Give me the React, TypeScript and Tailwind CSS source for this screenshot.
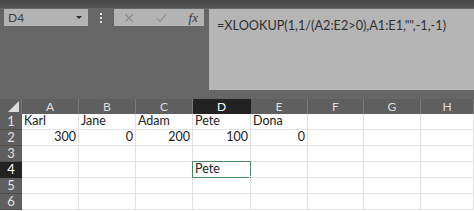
import React from 'react';

const COLS = ['A', 'B', 'C', 'D', 'E', 'F', 'G', 'H'];
const WIDTHS = ['w-[57px]', 'w-[57px]', 'w-[57px]', 'w-[58px]', 'w-[57px]', 'w-[56px]', 'w-[57px]', 'flex-1'];

type Cell = { v: string; right?: boolean };

const DATA: Record<number, Record<string, Cell>> = {
  1: { A: { v: 'Karl' }, B: { v: 'Jane' }, C: { v: 'Adam' }, D: { v: 'Pete' }, E: { v: 'Dona' } },
  2: {
    A: { v: '300', right: true },
    B: { v: '0', right: true },
    C: { v: '200', right: true },
    D: { v: '100', right: true },
    E: { v: '0', right: true },
  },
  4: { D: { v: 'Pete' } },
};

const FormulaBar: React.FC = () => (
  <div className="h-[99px] bg-[#666666] flex flex-col">
    <div className="h-[8px] bg-gradient-to-b from-[#444444] to-[#555555]" />
    <div className="flex items-start pt-[1px]">
      <div className="ml-[4px] w-[84px] h-[17px] bg-[#b3b3b3] flex items-center justify-between pl-[4px] pr-[6px]">
        <span className="text-[12px] text-[#3f3f3f] leading-none">D4</span>
        <span className="w-0 h-0 border-l-[3px] border-r-[3px] border-t-[3px] border-l-transparent border-r-transparent border-t-[#2e2e2e]" />
      </div>
      <div className="w-[26px] h-[17px] flex flex-col items-center justify-center gap-[2px]">
        <span className="w-[2px] h-[2px] bg-[#e4e4e4]" />
        <span className="w-[2px] h-[2px] bg-[#e4e4e4]" />
        <span className="w-[2px] h-[2px] bg-[#e4e4e4]" />
      </div>
      <div className="w-[90px] h-[17px] bg-[#b3b3b3] flex items-center pl-[10px] pr-[6px] justify-between">
        <svg width="10" height="10" viewBox="0 0 10 10">
          <path d="M1.5 1.5 L8.5 8.5 M8.5 1.5 L1.5 8.5" stroke="#8c8c8c" strokeWidth="1.3" fill="none" />
        </svg>
        <svg width="11" height="10" viewBox="0 0 11 10">
          <path d="M1 5.5 L4 8.5 L10 1.5" stroke="#959595" strokeWidth="1.5" fill="none" />
        </svg>
        <span className="text-[13px] italic text-[#333333] leading-none" style={{ fontFamily: '"Liberation Serif", serif' }}>
          fx
        </span>
      </div>
      <div className="ml-[5px] flex-1 h-[81px] bg-[#b5b5b5] pl-[8px] pt-[3px]">
        <span className="text-[12.7px] text-[#2f2f2f] leading-[14px]">=XLOOKUP(1,1/(A2:E2&gt;0),A1:E1,"",-1,-1)</span>
      </div>
    </div>
  </div>
);

const Sheet: React.FC = () => (
  <div className="flex flex-col">
    <div className="flex h-[15px] bg-[#5f5f5f]">
      <div className="w-[22px] relative border-r border-[#7a7a7a] overflow-hidden">
        <span className="absolute right-[2px] bottom-[2px] w-0 h-0 border-l-[11px] border-b-[11px] border-l-transparent border-b-[#dcdcdc]" />
      </div>
      {COLS.map((c, i) => (
        <div
          key={c}
          className={`${WIDTHS[i]} flex items-center justify-center text-[12px] leading-none border-r ${
            c === 'D' ? 'bg-[#222222] text-white border-[#222222]' : 'text-[#dddddd] border-[#7a7a7a]'
          }`}
        >
          {c}
        </div>
      ))}
    </div>
    {[1, 2, 3, 4, 5, 6].map((r) => (
      <div key={r} className="flex h-[16px]">
        <div
          className={`w-[22px] flex items-center justify-center text-[13px] leading-none border-b ${
            r === 4 ? 'bg-[#222222] text-white border-[#222222]' : 'bg-[#5f5f5f] text-[#e2e2e2] border-[#4f4f4f]'
          }`}
        >
          {r}
        </div>
        {COLS.map((c, i) => {
          const cell = DATA[r]?.[c];
          const sel = r === 4 && c === 'D';
          return (
            <div
              key={c}
              className={`${WIDTHS[i]} relative bg-white border-r border-b border-[#e1e1e1] flex items-center px-[2px] text-[12.5px] text-[#222222] leading-none ${
                cell?.right ? 'justify-end' : 'justify-start'
              }`}
            >
              {cell?.v}
              {sel && (
                <>
                  <span className="absolute left-[-1px] top-[-1px] right-[-1px] bottom-[-1px] border-[1.5px] border-[#4a8a68]" />
                  <span className="absolute right-[-3px] bottom-[-3px] w-[4px] h-[4px] bg-[#217346] border border-white" />
                </>
              )}
            </div>
          );
        })}
      </div>
    ))}
  </div>
);

export default function App() {
  return (
    <div className="w-[474px] h-[211px] overflow-hidden bg-white" style={{ fontFamily: 'Lato, "Liberation Sans", sans-serif' }}>
      <FormulaBar />
      <Sheet />
    </div>
  );
}
